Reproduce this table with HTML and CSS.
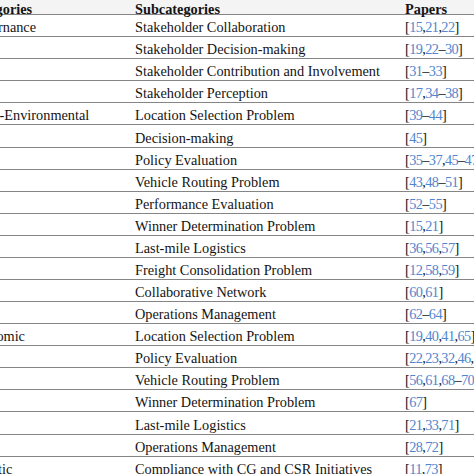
FILE: index.html
```html
<!DOCTYPE html>
<html>
<head>
<meta charset="utf-8">
<link rel="stylesheet" href="styles.css">
</head>
<body>
<div class="viewport">
  <div class="table">
    <div class="row head"><div class="c1">Categories</div><div class="c2">Subcategories</div><div class="c3">Papers</div></div>
    <div class="row"><div class="c1">Governance</div><div class="c2">Stakeholder Collaboration</div><div class="c3">[<a>15</a>,<a>21</a>,<a>22</a>]</div></div>
    <div class="row"><div class="c1"></div><div class="c2">Stakeholder Decision-making</div><div class="c3">[<a>19</a>,<a>22</a>–<a>30</a>]</div></div>
    <div class="row"><div class="c1"></div><div class="c2">Stakeholder Contribution and Involvement</div><div class="c3">[<a>31</a>–<a>33</a>]</div></div>
    <div class="row"><div class="c1"></div><div class="c2">Stakeholder Perception</div><div class="c3">[<a>17</a>,<a>34</a>–<a>38</a>]</div></div>
    <div class="row"><div class="c1">Socio-Environmental</div><div class="c2">Location Selection Problem</div><div class="c3">[<a>39</a>–<a>44</a>]</div></div>
    <div class="row"><div class="c1"></div><div class="c2">Decision-making</div><div class="c3">[<a>45</a>]</div></div>
    <div class="row"><div class="c1"></div><div class="c2">Policy Evaluation</div><div class="c3">[<a>35</a>–<a>37</a>,<a>45</a>–<a>47</a>]</div></div>
    <div class="row"><div class="c1"></div><div class="c2">Vehicle Routing Problem</div><div class="c3">[<a>43</a>,<a>48</a>–<a>51</a>]</div></div>
    <div class="row"><div class="c1"></div><div class="c2">Performance Evaluation</div><div class="c3">[<a>52</a>–<a>55</a>]</div></div>
    <div class="row"><div class="c1"></div><div class="c2">Winner Determination Problem</div><div class="c3">[<a>15</a>,<a>21</a>]</div></div>
    <div class="row"><div class="c1"></div><div class="c2">Last-mile Logistics</div><div class="c3">[<a>36</a>,<a>56</a>,<a>57</a>]</div></div>
    <div class="row"><div class="c1"></div><div class="c2">Freight Consolidation Problem</div><div class="c3">[<a>12</a>,<a>58</a>,<a>59</a>]</div></div>
    <div class="row"><div class="c1"></div><div class="c2">Collaborative Network</div><div class="c3">[<a>60</a>,<a>61</a>]</div></div>
    <div class="row"><div class="c1"></div><div class="c2">Operations Management</div><div class="c3">[<a>62</a>–<a>64</a>]</div></div>
    <div class="row"><div class="c1">Economic</div><div class="c2">Location Selection Problem</div><div class="c3">[<a>19</a>,<a>40</a>,<a>41</a>,<a>65</a>]</div></div>
    <div class="row"><div class="c1"></div><div class="c2">Policy Evaluation</div><div class="c3">[<a>22</a>,<a>23</a>,<a>32</a>,<a>46</a>,<a>66</a>]</div></div>
    <div class="row"><div class="c1"></div><div class="c2">Vehicle Routing Problem</div><div class="c3">[<a>56</a>,<a>61</a>,<a>68</a>–<a>70</a>]</div></div>
    <div class="row"><div class="c1"></div><div class="c2">Winner Determination Problem</div><div class="c3">[<a>67</a>]</div></div>
    <div class="row"><div class="c1"></div><div class="c2">Last-mile Logistics</div><div class="c3">[<a>21</a>,<a>33</a>,<a>71</a>]</div></div>
    <div class="row"><div class="c1"></div><div class="c2">Operations Management</div><div class="c3">[<a>28</a>,<a>72</a>]</div></div>
    <div class="row"><div class="c1">Holistic</div><div class="c2">Compliance with CG and CSR Initiatives</div><div class="c3">[<a>11</a>,<a>73</a>]</div></div>
  </div>
</div>
</body>
</html>
```
FILE: styles.css
```css
html, body {
  margin: 0;
  padding: 0;
  background: #ffffff;
}
.viewport {
  width: 474px;
  height: 474px;
  overflow: hidden;
}
.table {
  margin-top: -7px;
  margin-left: -33px;
  width: 640px;
  font-family: "Liberation Serif", "Times New Roman", serif;
  font-size: 14.3px;
  color: #141414;
}
.row {
  display: grid;
  grid-template-columns: 168px 270px 202px;
  height: 22.08px;
  box-sizing: border-box;
  border-bottom: 1.6px solid #858585;
  align-items: end;
  padding-bottom: 1px;
  line-height: 16px;
  white-space: nowrap;
}
.head {
  font-weight: bold;
  background: #f4f4f4;
  padding-bottom: 0;
}
.head > div {
  margin-bottom: -2.5px;
}
.c1, .c2, .c3 {
  overflow: hidden;
}
.c3 {
  letter-spacing: -0.6px;
}
.head .c3 {
  letter-spacing: 0;
}
a {
  color: #4f86cf;
  text-decoration: none;
}
```
